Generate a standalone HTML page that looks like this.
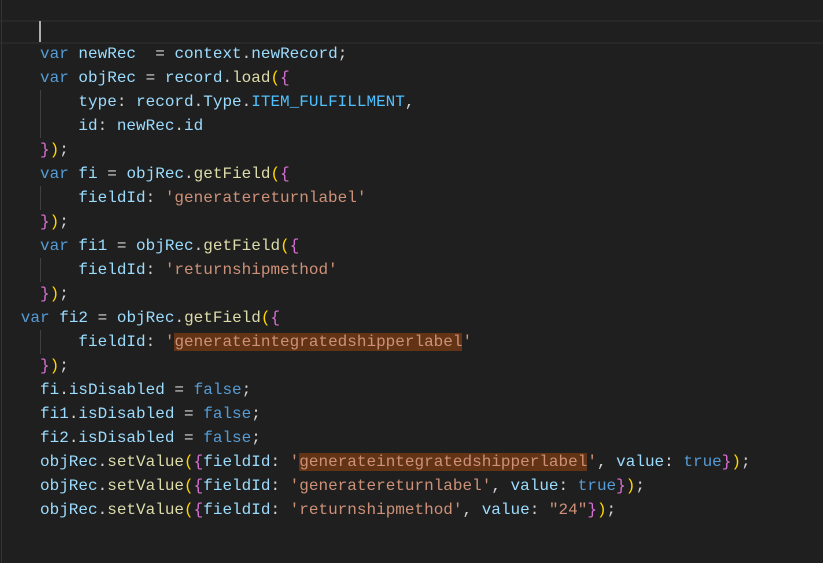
<!DOCTYPE html>
<html><head><meta charset="utf-8"><style>
html,body{margin:0;padding:0;background:#1f1f1f;width:823px;height:563px;overflow:hidden}
.ed{position:relative;width:823px;height:563px;font-family:"Liberation Mono",monospace;font-size:16px;color:#d4d4d4}
.l{position:absolute;left:1.6px;height:24px;line-height:24px;white-space:pre}
.k{color:#569cd6}.v{color:#9cdcfe}.f{color:#dcdcaa}.s{color:#ce9178}.c{color:#4fc1ff}
.y{color:#ffd700}.p{color:#da70d6}
.h{background:#623315}
.g{position:absolute;left:40px;width:1px;height:24px;background:#404040}
</style></head><body><div class="ed">
<div style="position:absolute;left:0;top:20px;width:823px;height:2px;background:#282828"></div>
<div style="position:absolute;left:0;top:42px;width:823px;height:2px;background:#282828"></div>
<div style="position:absolute;left:1px;top:0;width:1px;height:563px;background:#333"></div>
<div style="position:absolute;left:39px;top:21px;width:2px;height:21px;background:#aeafad"></div>
<div class="g" style="top:90px"></div><div class="g" style="top:114px"></div>
<div class="g" style="top:186px"></div><div class="g" style="top:258px"></div><div class="g" style="top:330px"></div>
<div class="l" style="top:42px">    <span class="k">var</span> <span class="v">newRec</span>  = <span class="v">context</span>.<span class="v">newRecord</span>;</div>
<div class="l" style="top:66px">    <span class="k">var</span> <span class="v">objRec</span> = <span class="v">record</span>.<span class="f">load</span><span class="y">(</span><span class="p">{</span></div>
<div class="l" style="top:90px">        <span class="v">type</span>: <span class="v">record</span>.<span class="v">Type</span>.<span class="c">ITEM_FULFILLMENT</span>,</div>
<div class="l" style="top:114px">        <span class="v">id</span>: <span class="v">newRec</span>.<span class="v">id</span></div>
<div class="l" style="top:138px">    <span class="p">}</span><span class="y">)</span>;</div>
<div class="l" style="top:162px">    <span class="k">var</span> <span class="v">fi</span> = <span class="v">objRec</span>.<span class="f">getField</span><span class="y">(</span><span class="p">{</span></div>
<div class="l" style="top:186px">        <span class="v">fieldId</span>: <span class="s">'generatereturnlabel'</span></div>
<div class="l" style="top:210px">    <span class="p">}</span><span class="y">)</span>;</div>
<div class="l" style="top:234px">    <span class="k">var</span> <span class="v">fi1</span> = <span class="v">objRec</span>.<span class="f">getField</span><span class="y">(</span><span class="p">{</span></div>
<div class="l" style="top:258px">        <span class="v">fieldId</span>: <span class="s">'returnshipmethod'</span></div>
<div class="l" style="top:282px">    <span class="p">}</span><span class="y">)</span>;</div>
<div class="l" style="top:306px">  <span class="k">var</span> <span class="v">fi2</span> = <span class="v">objRec</span>.<span class="f">getField</span><span class="y">(</span><span class="p">{</span></div>
<div class="l" style="top:330px">        <span class="v">fieldId</span>: <span class="s">'<span class="h">generateintegratedshipperlabel</span>'</span></div>
<div class="l" style="top:354px">    <span class="p">}</span><span class="y">)</span>;</div>
<div class="l" style="top:378px">    <span class="v">fi</span>.<span class="v">isDisabled</span> = <span class="k">false</span>;</div>
<div class="l" style="top:402px">    <span class="v">fi1</span>.<span class="v">isDisabled</span> = <span class="k">false</span>;</div>
<div class="l" style="top:426px">    <span class="v">fi2</span>.<span class="v">isDisabled</span> = <span class="k">false</span>;</div>
<div class="l" style="top:450px">    <span class="v">objRec</span>.<span class="f">setValue</span><span class="y">(</span><span class="p">{</span><span class="v">fieldId</span>: <span class="s">'<span class="h">generateintegratedshipperlabel</span>'</span>, <span class="v">value</span>: <span class="k">true</span><span class="p">}</span><span class="y">)</span>;</div>
<div class="l" style="top:474px">    <span class="v">objRec</span>.<span class="f">setValue</span><span class="y">(</span><span class="p">{</span><span class="v">fieldId</span>: <span class="s">'generatereturnlabel'</span>, <span class="v">value</span>: <span class="k">true</span><span class="p">}</span><span class="y">)</span>;</div>
<div class="l" style="top:498px">    <span class="v">objRec</span>.<span class="f">setValue</span><span class="y">(</span><span class="p">{</span><span class="v">fieldId</span>: <span class="s">'returnshipmethod'</span>, <span class="v">value</span>: <span class="s">"24"</span><span class="p">}</span><span class="y">)</span>;</div>
</div></body></html>
